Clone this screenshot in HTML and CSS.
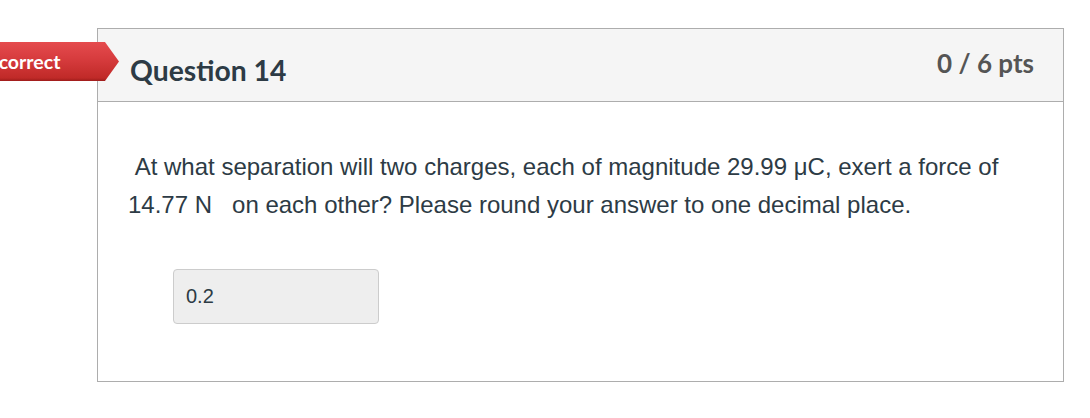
FILE: index.html
```html
<!DOCTYPE html>
<html>
<head>
<meta charset="utf-8">
<link rel="stylesheet" href="styles.css">
</head>
<body>
<div class="page">
  <div class="question">
    <div class="answer-arrow">Incorrect</div>
    <div class="q-header">
      <h2 class="q-title">Question 14</h2>
      <div class="q-points">0 / 6 pts</div>
    </div>
    <div class="q-body">
      <p class="q-text">&nbsp;At what separation will two charges, each of magnitude 29.99 μC, exert a force of 14.77 N &nbsp;&nbsp;on each other? Please round your answer to one decimal place.</p>
      <div class="answer-box">0.2</div>
    </div>
  </div>
</div>
</body>
</html>
```

FILE: styles.css
```css
html, body {
  margin: 0;
  padding: 0;
  background: #ffffff;
}

.page {
  padding: 28px 0 0 97px;
  width: 967px;
}

.question {
  position: relative;
  border: 1px solid #adadad;
  background: #ffffff;
}

.answer-arrow {
  position: absolute;
  z-index: 2;
  left: -128px;
  top: 13px;
  width: 149px;
  height: 39px;
  box-sizing: border-box;
  padding-left: 12px;
  font-family: Lato, "Liberation Sans", sans-serif;
  font-weight: 700;
  font-size: 19.5px;
  line-height: 40px;
  color: #ffffff;
  background: linear-gradient(to bottom, #e54b4e 0%, #d63b3d 45%, #c02a28 92%, #9e1c1b 100%);
  clip-path: polygon(0 0, calc(100% - 14px) 0, 100% 50%, calc(100% - 14px) 100%, 0 100%);
}

.q-header {
  display: flex;
  justify-content: space-between;
  align-items: flex-start;
  height: 73px;
  box-sizing: border-box;
  padding: 0 29px 0 32px;
  background: #f5f5f5;
  border-bottom: 1px solid #adadad;
}

.q-title {
  margin: 24px 0 0 0;
  font-family: Lato, "Liberation Sans", sans-serif;
  font-weight: 700;
  font-size: 28.3px;
  line-height: 34px;
  color: #2d3b45;
}

.q-points {
  margin-top: 18px;
  font-family: Lato, "Liberation Sans", sans-serif;
  font-weight: 700;
  font-size: 26px;
  line-height: 32px;
  color: #555555;
}

.q-body {
  padding: 46px 30px 57px 30px;
}

.q-text {
  margin: 0;
  font-family: "Liberation Sans", Arial, sans-serif;
  font-size: 24px;
  line-height: 38px;
  color: #2d3b45;
}

.answer-box {
  margin: 45px 0 0 45px;
  width: 206px;
  height: 55px;
  box-sizing: border-box;
  padding-left: 12px;
  border: 1px solid #cccccc;
  border-radius: 4px;
  background: #eeeeee;
  font-family: "Liberation Sans", Arial, sans-serif;
  font-size: 20px;
  line-height: 53px;
  color: #2d3b45;
}
```
